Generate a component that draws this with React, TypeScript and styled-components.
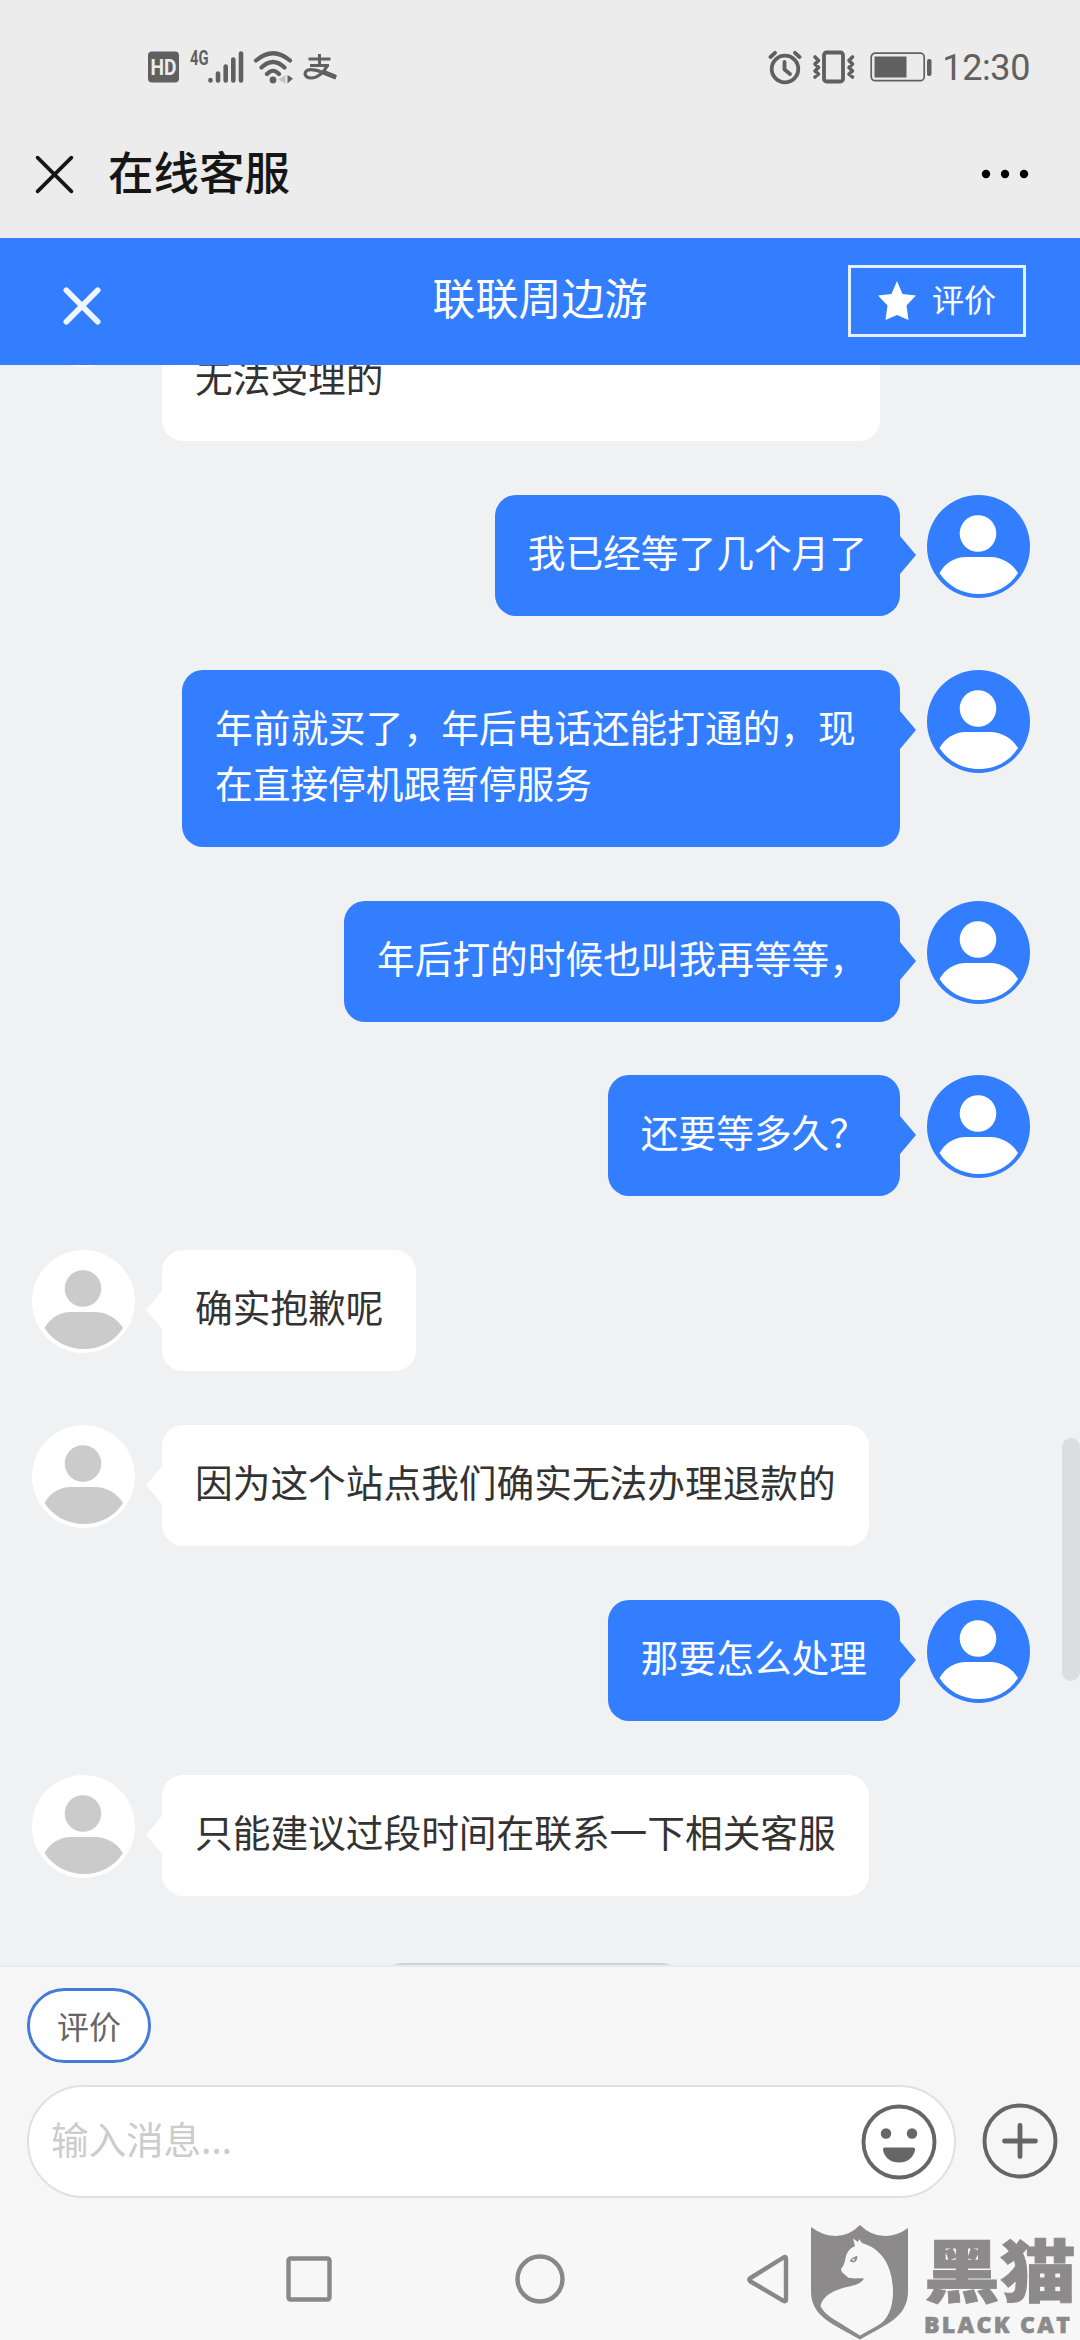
import React from 'react';
import styled, { createGlobalStyle } from 'styled-components';

const Global = createGlobalStyle`
  * { box-sizing: border-box; }
  body { margin: 0; background: #f6f6f6; }
`;

const Screen = styled.div`
  width: 1080px;
  height: 2340px;
  display: flex;
  flex-direction: column;
  overflow: hidden;
  background: #f6f6f6;
  font-family: Roboto, 'Noto Sans CJK SC', sans-serif;
`;

const StatusBar = styled.header`
  height: 130px;
  flex: none;
  padding: 3px 50px 0 147px;
  display: flex;
  align-items: center;
  justify-content: space-between;
  background: #ececec;
  color: #606060;
`;

const StatusGroup = styled.div`
  display: flex;
  align-items: center;
`;

const Clock = styled.span`
  font-size: 36px;
  line-height: 42px;
  margin-left: 10px;
  padding-top: 2px;
  letter-spacing: -0.4px;
`;

const PageBar = styled.div`
  height: 108px;
  flex: none;
  display: flex;
  align-items: center;
  padding: 0 51px 20px 34px;
  background: #ececec;
`;

const PageTitle = styled.h1`
  margin: 0 auto 0 33px;
  padding-top: 2px;
  font-size: 45.5px;
  line-height: 60px;
  font-weight: 500;
  color: #161616;
`;

const ChatHeader = styled.div`
  height: 127px;
  flex: none;
  display: grid;
  grid-template-columns: 232px 1fr 232px;
  align-items: center;
  background: #327eff;
  color: #fff;
  position: relative;
  z-index: 1;
`;

const CloseButton = styled.button`
  all: unset;
  display: flex;
  margin: 9px 0 0 63px;
`;

const ChatTitle = styled.h2`
  margin: 0;
  padding-bottom: 4px;
  text-align: center;
  font-size: 43px;
  line-height: 60px;
  font-weight: 400;
`;

const RateButton = styled.button`
  display: flex;
  align-items: center;
  width: 178px;
  height: 72px;
  margin-bottom: 1px;
  padding: 0 0 0 27px;
  gap: 16px;
  border: 3px solid #e4f0ff;
  background: none;
  color: #fff;
  font: 400 32px/44px 'Noto Sans CJK SC', sans-serif;
`;

const RateLabel = styled.span`
  padding-bottom: 7px;
`;

const Chat = styled.main`
  height: 1600px;
  flex: none;
  position: relative;
  overflow: hidden;
  background: #eff1f3;
`;

const MessageList = styled.div`
  display: flex;
  flex-direction: column;
  gap: 53.8px;
  margin-top: -100.8px;
  padding: 0 50px 0 32px;
`;

const Row = styled.div<{ $mine?: boolean }>`
  display: flex;
  flex-direction: ${(p) => (p.$mine ? 'row-reverse' : 'row')};
  align-items: flex-start;
  gap: 27px;
`;

const Bubble = styled.div<{ $mine?: boolean; $tall?: boolean }>`
  position: relative;
  display: flex;
  align-items: flex-end;
  width: ${(p) => (p.$tall ? '718px' : 'auto')};
  min-height: ${(p) => (p.$tall ? '177px' : '121px')};
  max-width: 718px;
  padding: 28px 33px 37px;
  border-radius: 21px;
  background: ${(p) => (p.$mine ? '#327eff' : '#fff')};
  color: ${(p) => (p.$mine ? '#fff' : '#333')};
  font-size: 37.7px;
  line-height: 56px;
  font-family: 'Noto Sans CJK SC', sans-serif;

  &::after {
    content: '';
    position: absolute;
    top: 41px;
    ${(p) => (p.$mine ? 'right: -16px' : 'left: -16px')};
    border: 19px solid transparent;
    border-width: 19px 0;
    ${(p) => (p.$mine ? 'border-left: 16px solid #327eff' : 'border-right: 16px solid #fff')};
  }
`;

const TimePill = styled.div`
  width: 300px;
  height: 56px;
  margin: 13.6px 0 0 350px;
  border-radius: 20px;
  background: #cfd1d3;
`;

const ScrollThumb = styled.div`
  position: absolute;
  right: 0;
  top: 1073px;
  width: 18px;
  height: 243px;
  border-radius: 9px;
  background: #dcdddf;
`;

const Composer = styled.section`
  height: 250px;
  flex: none;
  border-top: 2px solid #e9eaeb;
  padding: 21px 22px 0 27px;
  background: #f6f6f6;
`;

const QuickReply = styled.button`
  display: block;
  width: 124px;
  height: 75px;
  padding: 0 0 2px;
  border: 3px solid #437bd6;
  border-radius: 38px;
  background: #fff;
  color: #666;
  font: 400 32px/44px 'Noto Sans CJK SC', sans-serif;
`;

const InputRow = styled.div`
  display: flex;
  align-items: center;
  justify-content: space-between;
  margin-top: 22px;
`;

const InputBox = styled.div`
  display: flex;
  align-items: center;
  justify-content: space-between;
  width: 929px;
  height: 113px;
  padding: 0 17px 0 22px;
  border: 2.5px solid #e0e0e0;
  border-radius: 57px;
  background: #fff;
`;

const Placeholder = styled.span`
  font: 400 37.7px/56px 'Noto Sans CJK SC', sans-serif;
  letter-spacing: -0.2px;
  color: #ccc;
  padding-bottom: 7px;
`;

const PlusButton = styled.button`
  all: unset;
  display: flex;
  padding-bottom: 2px;
`;

const NavBar = styled.footer`
  flex: 1;
  display: flex;
  justify-content: space-between;
  align-items: center;
  padding: 2px 0 0 284px;
  background: #f7f7f7;
`;

const NavKeys = styled.div`
  display: flex;
  align-items: center;
  justify-content: space-between;
  width: 508px;
`;

const Brand = styled.div`
  display: flex;
  align-items: flex-start;
  height: 115px;
  gap: 15px;
  margin-top: 8px;
  color: #8c8a8b;
`;

const BrandText = styled.div`
  width: 156px;
  display: flex;
  flex-direction: column;
  padding-top: 4px;
`;

const BrandName = styled.span`
  font: 900 76px/76px 'Noto Sans CJK SC', sans-serif;
  -webkit-text-stroke: 1px #8c8a8b;
  white-space: nowrap;
  transform: scaleY(0.9);
`;

const BrandLatin = styled.span`
  font: 800 23px/26px 'Open Sans', sans-serif;
  -webkit-text-stroke: 0.6px #8c8a8b;
  letter-spacing: 2.3px;
  margin-top: 6px;
  white-space: nowrap;
`;

const HdIcon = () => (
  <svg width="33" height="34" viewBox="0 0 33 34">
    <rect x="1" y="1.500" width="31" height="31" rx="4" fill="#606060" />
    <text x="16.500" y="24.500" textAnchor="middle" fontFamily="Roboto" fontWeight="700" fontSize="21.500" textLength="26" lengthAdjust="spacingAndGlyphs" fill="#ececec">HD</text>
  </svg>
);

const SignalIcon = () => (
  <svg width="56" height="40" viewBox="0 -4 56 40" style={{ marginLeft: 9, marginBottom: 3 }}>
    <text x="1" y="15.500" fontFamily="Roboto" fontWeight="700" fontSize="20.500" textLength="18.500" lengthAdjust="spacingAndGlyphs" fill="#606060">4G</text>
    <g stroke="#606060" strokeWidth="4.600" strokeLinecap="round">
      <path d="M21.500 31v.5M29 24.500v7M36.700 17.500v14M44.300 10.500v21M52 4.500v27" />
    </g>
  </svg>
);

const WifiIcon = () => (
  <svg width="42" height="36" viewBox="0 0 42 36" style={{ marginLeft: 7 }}>
    <g fill="none" stroke="#606060" strokeWidth="4.200" strokeLinecap="round">
      <path d="M4 11.500Q21 -3 38 11.500M9.500 18.500Q21 7.500 32.500 18.500M15 25Q21 18.500 27 25" />
    </g>
    <circle cx="21" cy="31" r="3.400" fill="#606060" />
    <path d="M33.500 26v9l-7-4.500z" fill="#c4c4c4" />
    <path d="M35.500 26l5.500 3.500-5.500 5z" fill="#606060" />
  </svg>
);

const AlipayIcon = () => (
  <svg width="34" height="36" viewBox="0 0 34 36" style={{ marginLeft: 9 }}>
    <g fill="none" stroke="#606060" strokeWidth="3">
      <path d="M5.500 10H27.500M16.500 5V16M7 16.500H26" />
      <path d="M24.500 16C21.500 23 15 29 8 29C2 29 0.500 24 4 21.500C9 18.500 18 23 33 28.500" strokeWidth="3.200" />
      <path d="M20 23L33 28.200" strokeWidth="4.800" />
    </g>
  </svg>
);

const AlarmIcon = () => (
  <svg width="34" height="36" viewBox="0 0 34 36">
    <g fill="none" stroke="#606060" strokeWidth="3.800" strokeLinecap="round" strokeLinejoin="round">
      <circle cx="17" cy="20" r="13.300" />
      <path d="M16.500 13v7.500l5.500 4.500" />
      <path d="M2.500 8L7 3.800M31.500 8L27 3.800" />
    </g>
  </svg>
);

const VibrateIcon = () => (
  <svg width="44" height="36" viewBox="0 0 44 36" style={{ marginLeft: 10 }}>
    <g fill="none" stroke="#606060" strokeLinecap="round" strokeLinejoin="round">
      <rect x="12" y="3.500" width="19" height="29" rx="2.500" strokeWidth="3.800" />
      <path d="M3 8l3.500 3.500L3 15l3.500 3.500L3 22l3.500 3L3 28M40.500 8L37 11.500l3.500 3.500-3.500 3.500 3.500 3.500-3.500 3 3.500 3" strokeWidth="3.600" />
    </g>
  </svg>
);

const BatteryIcon = () => (
  <svg width="62" height="32" viewBox="0 0 62 32" style={{ marginLeft: 14 }}>
    <rect x="1.200" y="2.200" width="53" height="27.500" rx="4" fill="none" stroke="#606060" strokeWidth="1.700" />
    <rect x="4.500" y="5.500" width="32" height="21" fill="#606060" />
    <rect x="57" y="8" width="4.500" height="17" rx="2" fill="#606060" />
  </svg>
);

const Cross = ({ size, width, color }: { size: number; width: number; color: string }) => (
  <svg width={size} height={size} viewBox="0 0 40 40">
    <path d="M3.500 3.500L36.500 36.500M36.500 3.500L3.500 36.500" stroke={color} strokeWidth={width} strokeLinecap="round" />
  </svg>
);

const Avatar = ({ mine }: { mine?: boolean }) => (
  <svg width="103" height="103" viewBox="0 0 103 103" style={{ flex: 'none' }}>
    <circle cx="51.500" cy="51.500" r="51.500" fill={mine ? '#327eff' : '#fff'} />
    <g fill={mine ? '#fff' : '#cbcbcb'}>
      <circle cx="51" cy="38.500" r="18.300" />
      <path d="M12.500 78C18 68 28 62 39 62H63C74 62 85 68 91 78C82 92 68 99 52 99C35 99 21 91 12.500 78Z" />
    </g>
  </svg>
);

const messages: { text: string; mine?: boolean; tall?: boolean }[] = [
  { text: '无法受理的', tall: true },
  { text: '我已经等了几个月了', mine: true },
  { text: '年前就买了，年后电话还能打通的，现在直接停机跟暂停服务', mine: true },
  { text: '年后打的时候也叫我再等等，', mine: true },
  { text: '还要等多久？', mine: true },
  { text: '确实抱歉呢' },
  { text: '因为这个站点我们确实无法办理退款的' },
  { text: '那要怎么处理', mine: true },
  { text: '只能建议过段时间在联系一下相关客服' },
];

export default function App() {
  return (
    <Screen>
      <Global />
      <StatusBar>
        <StatusGroup>
          <HdIcon />
          <SignalIcon />
          <WifiIcon />
          <AlipayIcon />
        </StatusGroup>
        <StatusGroup>
          <AlarmIcon />
          <VibrateIcon />
          <BatteryIcon />
          <Clock>12:30</Clock>
        </StatusGroup>
      </StatusBar>
      <PageBar>
        <Cross size={41} width={3.6} color="#161616" />
        <PageTitle>在线客服</PageTitle>
        <svg width="48" height="10" viewBox="0 0 48 10">
          <circle cx="5" cy="5" r="4.200" />
          <circle cx="24" cy="5" r="4.200" />
          <circle cx="43" cy="5" r="4.200" />
        </svg>
      </PageBar>
      <ChatHeader>
        <CloseButton>
          <Cross size={38} width={6} color="#eef5ff" />
        </CloseButton>
        <ChatTitle>联联周边游</ChatTitle>
        <RateButton>
          <svg width="38" height="40" viewBox="0 0 38 40">
            <path d="M19 0l5.500 13L38 14.500 28.500 24.500 30.500 39 19 34 7.500 39 9.500 24.500 0 14.500 13.500 13z" fill="#fff" />
          </svg>
          <RateLabel>评价</RateLabel>
        </RateButton>
      </ChatHeader>
      <Chat>
        <MessageList>
          {messages.map((m) => (
            <Row key={m.text} $mine={m.mine}>
              <Avatar mine={m.mine} />
              <Bubble $mine={m.mine} $tall={m.tall}>{m.text}</Bubble>
            </Row>
          ))}
          <TimePill />
        </MessageList>
        <ScrollThumb />
      </Chat>
      <Composer>
        <QuickReply>评价</QuickReply>
        <InputRow>
          <InputBox>
            <Placeholder>输入消息...</Placeholder>
            <svg width="76" height="76" viewBox="0 0 76 76">
              <circle cx="38" cy="38" r="35.500" fill="none" stroke="#666" strokeWidth="3.900" />
              <circle cx="25" cy="29.500" r="5.200" fill="#666" />
              <circle cx="51" cy="29.500" r="5.200" fill="#666" />
              <path d="M23.500 43.500H52.500Q54.300 43.500 54 46C52.500 54 46 58.500 38 58.500S23.500 54 22 46Q21.700 43.500 23.500 43.500Z" fill="#666" />
            </svg>
          </InputBox>
          <PlusButton>
            <svg width="76" height="76" viewBox="0 0 76 76">
              <circle cx="38" cy="38" r="35.500" fill="none" stroke="#666" strokeWidth="3.900" />
              <path d="M38 22.500v31M22.500 38h31" stroke="#666" strokeWidth="4.800" strokeLinecap="round" />
            </svg>
          </PlusButton>
        </InputRow>
      </Composer>
      <NavBar>
        <NavKeys>
          <svg width="50" height="52" viewBox="0 0 50 52">
            <rect x="4.500" y="5.500" width="41" height="41" rx="2" fill="none" stroke="#888" strokeWidth="4.400" />
          </svg>
          <svg width="52" height="52" viewBox="0 0 52 52">
            <circle cx="26" cy="26" r="22.500" fill="none" stroke="#888" strokeWidth="4.400" />
          </svg>
          <svg width="46" height="52" viewBox="0 0 46 52">
            <path d="M40 5.500V46.500Q40 49 37.500 47.800L4.500 28.500Q2 26.500 4.500 25L37.500 4.500Q40 3.200 40 5.500Z" fill="none" stroke="#888" strokeWidth="4.400" strokeLinejoin="round" />
          </svg>
        </NavKeys>
        <Brand>
          <svg width="98" height="115" viewBox="0 0 98 115">
            <path d="M0 2Q12 11 25 11Q38 11 49 0Q60 11 74 11Q86 11 97 3V66C97 92 76 99 49 114.500C22 99 0 92 0 66Z" fill="#8c8a8b" />
            <path d="M44 21L42 13.500L47 17L48 14L51 18C72 24 82 43 82 67C82 84 76 96 66 101L49 110.500L29 98C20 93 13 88 9.500 81C13 68 27 64 42 60.500C48 59 51 57 53 53.500C45 53 41 54 37 52.500C34 49 30 48 30 44C34 39 34 35 35 31C37 25 40 23 44 21Z" fill="#f7f7f7" />
            <path d="M38.500 36Q42 31.500 46.500 31Q46 37 42 37.500Z" fill="#8c8a8b" />
            <path d="M41 34.500l3-1-1.500 3z" fill="#f7f7f7" />
          </svg>
          <BrandText>
            <BrandName>黑猫</BrandName>
            <BrandLatin>BLACK CAT</BrandLatin>
          </BrandText>
        </Brand>
      </NavBar>
    </Screen>
  );
}
